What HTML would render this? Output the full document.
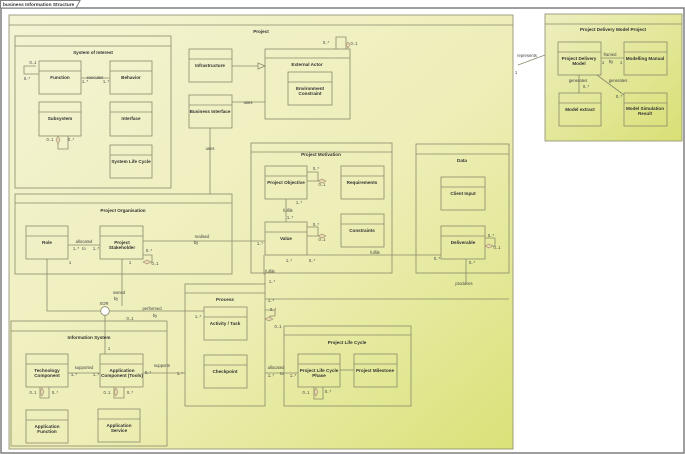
<!DOCTYPE html>
<html><head><meta charset="utf-8"><style>
html,body{margin:0;padding:0;background:#fff;}
svg{display:block;}
text{font-family:"Liberation Sans",sans-serif;font-size:4.6px;fill:#333;text-anchor:middle;font-weight:bold;}
.n{font-weight:normal;font-size:4.2px;fill:#444;}
.s{text-anchor:start;}
</style></head><body>
<svg width="685" height="454" viewBox="0 0 685 454" xmlns="http://www.w3.org/2000/svg">
<defs>
<linearGradient id="g" x1="0" y1="0" x2="1" y2="1">
<stop offset="0" stop-color="#f3f3d4"/><stop offset="0.55" stop-color="#eeeeb8"/><stop offset="1" stop-color="#d9e278"/>
</linearGradient>
<linearGradient id="g2" x1="0" y1="0" x2="1" y2="1">
<stop offset="0" stop-color="#eeeec0"/><stop offset="1" stop-color="#d8e074"/>
</linearGradient>
</defs>
<rect x="0" y="0" width="685" height="454" fill="#fff"/>
<!-- frame -->
<rect x="1" y="8" width="683" height="445" fill="none" stroke="#7f7f7f" stroke-width="1.5"/>
<path d="M0.5 0.5 H80 L76 8 H0.5 Z" fill="#fff" stroke="#7f7f7f"/>
<text x="3" y="6" class="s" style="font-size:4.8px">business Information Structure</text>

<g stroke="#8a8a6c" stroke-width="0.8" fill="none">
<!-- Project package -->
<rect x="9" y="15" width="504" height="434" fill="url(#g)"/>
<line x1="9" y1="25" x2="513" y2="25"/>
<!-- PDM package -->
<rect x="545" y="14" width="137" height="127" fill="url(#g2)"/>
<line x1="545" y1="24" x2="682" y2="24"/>

<!-- packages -->
<rect x="15" y="36" width="156" height="152"/><line x1="15" y1="46" x2="171" y2="46"/>
<rect x="265" y="49" width="85" height="70"/><line x1="265" y1="58" x2="350" y2="58"/>
<rect x="251" y="143" width="141" height="130"/><line x1="251" y1="152" x2="392" y2="152"/>
<rect x="416" y="144" width="93" height="129"/><line x1="416" y1="154" x2="509" y2="154"/>
<rect x="15" y="194" width="217" height="80"/><line x1="15" y1="203" x2="232" y2="203"/>
<rect x="185" y="284" width="80" height="122"/><line x1="185" y1="293" x2="265" y2="293"/>
<rect x="284" y="326" width="127" height="80"/><line x1="284" y1="335" x2="411" y2="335"/>
<rect x="11" y="321" width="156" height="125"/><line x1="11" y1="331" x2="167" y2="331"/>

<!-- classes -->
<g id="cls">
<rect x="39" y="61" width="42" height="33"/><line x1="39" y1="71" x2="81" y2="71"/>
<rect x="110" y="61" width="42" height="33"/><line x1="110" y1="71" x2="152" y2="71"/>
<rect x="39" y="102" width="42" height="34"/><line x1="39" y1="112" x2="81" y2="112"/>
<rect x="110" y="102" width="42" height="34"/><line x1="110" y1="112" x2="152" y2="112"/>
<rect x="110" y="145" width="42" height="33"/><line x1="110" y1="155" x2="152" y2="155"/>
<rect x="189" y="49" width="43" height="33"/><line x1="189" y1="59" x2="232" y2="59"/>
<rect x="189" y="95" width="43" height="33"/><line x1="189" y1="105" x2="232" y2="105"/>
<rect x="288" y="72" width="44" height="33"/><line x1="288" y1="82" x2="332" y2="82"/>
<rect x="265" y="166" width="42" height="33"/><line x1="265" y1="176" x2="307" y2="176"/>
<rect x="341" y="166" width="43" height="33"/><line x1="341" y1="176" x2="384" y2="176"/>
<rect x="265" y="222" width="42" height="33"/><line x1="265" y1="232" x2="307" y2="232"/>
<rect x="341" y="214" width="43" height="33"/><line x1="341" y1="224" x2="384" y2="224"/>
<rect x="441" y="177" width="44" height="33"/><line x1="441" y1="187" x2="485" y2="187"/>
<rect x="441" y="226" width="44" height="33"/><line x1="441" y1="236" x2="485" y2="236"/>
<rect x="26" y="226" width="42" height="33"/><line x1="26" y1="236" x2="68" y2="236"/>
<rect x="100" y="226" width="43" height="33"/><line x1="100" y1="236" x2="143" y2="236"/>
<rect x="204" y="307" width="43" height="33"/><line x1="204" y1="317" x2="247" y2="317"/>
<rect x="204" y="355" width="43" height="33"/><line x1="204" y1="365" x2="247" y2="365"/>
<rect x="298" y="354" width="42" height="33"/><line x1="298" y1="364" x2="340" y2="364"/>
<rect x="354" y="354" width="43" height="33"/><line x1="354" y1="364" x2="397" y2="364"/>
<rect x="26" y="354" width="42" height="33"/><line x1="26" y1="364" x2="68" y2="364"/>
<rect x="100" y="354" width="43" height="33"/><line x1="100" y1="364" x2="143" y2="364"/>
<rect x="26" y="410" width="42" height="33"/><line x1="26" y1="420" x2="68" y2="420"/>
<rect x="98" y="409" width="42" height="33"/><line x1="98" y1="419" x2="140" y2="419"/>
<rect x="558" y="42" width="43" height="33"/><line x1="558" y1="52" x2="601" y2="52"/>
<rect x="624" y="42" width="43" height="33"/><line x1="624" y1="52" x2="667" y2="52"/>
<rect x="559" y="93" width="42" height="33"/><line x1="559" y1="103" x2="601" y2="103"/>
<rect x="624" y="93" width="43" height="33"/><line x1="624" y1="103" x2="667" y2="103"/>
</g>

<!-- connectors -->
<path d="M81 78 H110"/>
<path d="M39 74 H24 V66 H36"/>
<path d="M58 136 V149 H68 V136"/>
<path d="M232 66 H258"/><path d="M258 63 L265 66 L258 69 Z"/>
<path d="M265 102 H232"/>
<path d="M210 128 V194"/>
<path d="M336 49 V37 H346 V49"/>
<path d="M286 199 V222"/>
<path d="M307 181 H318 V172 H307"/>
<path d="M307 236 H318 V227 H307"/>
<path d="M307 255 H441"/>
<path d="M485 238 H495 V246 H485"/>
<path d="M466 259 V284"/>
<path d="M265 299 H509"/>
<path d="M143 241 H232 M232 241 H265"/>
<path d="M68 245 H100"/>
<path d="M143 255 H152 V262 H143"/>
<path d="M47 259 V311 H101"/>
<path d="M122 259 V306"/>
<path d="M109 311 H204"/>
<path d="M105 315 V354"/>
<path d="M143 373 H185"/>
<path d="M68 373 H100"/>
<path d="M40 387 V398 H49 V387"/>
<path d="M114 387 V398 H124 V387"/>
<path d="M265 373 H298"/>
<path d="M340 370 H354"/>
<path d="M314 387 V399 H323 V387"/>
<path d="M265 319 H270 V316 H275 V310 H265"/>
<path d="M264 255 V274 H265 V284"/>
<path d="M601 58 H624"/>
<path d="M579 75 V93"/>
<path d="M597 75 L624 95"/>
<path d="M545 55 L518 65"/>
</g>
<!-- diamonds -->
<g fill="#e8d8b0" stroke="#a08c6c" stroke-width="0.6">
<path d="M58 136 l2 4 l-2 4 l-2 -4 z"/>
<path d="M318 181 l4 -2 l4 2 l-4 2 z"/>
<path d="M318 236 l4 -2 l4 2 l-4 2 z"/>
<path d="M346 45 l2 -3 l2 3 l-2 3 z"/>
<path d="M485 246 l4 -2 l4 2 l-4 2 z"/>
<path d="M143 262 l4 -2 l4 2 l-4 2 z"/>
<path d="M40 392 l2 -4 l2 4 l-2 4 z"/>
<path d="M114 392 l2 -4 l2 4 l-2 4 z"/>
<path d="M314 392 l2 -4 l2 4 l-2 4 z"/>
<path d="M265 319 l4 -2 l4 2 l-4 2 z"/>
</g>
<circle cx="105" cy="311" r="4.3" fill="#fff" stroke="#8a8a6c" stroke-width="0.8"/>

<!-- labels -->
<text x="261" y="33">Project</text>
<text x="613" y="31">Project Delivery Model Project</text>
<text x="93" y="54">System of Interest</text>
<text x="307" y="66">External Actor</text>
<text x="321" y="156">Project Motivation</text>
<text x="462" y="162">Data</text>
<text x="123" y="212">Project Organisation</text>
<text x="225" y="301">Process</text>
<text x="347" y="344">Project Life Cycle</text>
<text x="89" y="339">Information System</text>

<text x="60" y="79">Function</text>
<text x="131" y="79">Behavior</text>
<text x="60" y="120">Subsystem</text>
<text x="131" y="120">Interface</text>
<text x="131" y="163">System Life Cycle</text>
<text x="210" y="67">Infrastructure</text>
<text x="210" y="113">Business Interface</text>
<text x="310" y="90">Environment</text><text x="310" y="95">Constraint</text>
<text x="286" y="184">Project Objective</text>
<text x="362" y="184">Requirements</text>
<text x="286" y="240">Value</text>
<text x="362" y="232">Constraints</text>
<text x="463" y="195">Client Input</text>
<text x="463" y="244">Deliverable</text>
<text x="47" y="244">Role</text>
<text x="122" y="244">Project</text><text x="122" y="249">Stakeholder</text>
<text x="225" y="325">Activity / Task</text>
<text x="225" y="373">Checkpoint</text>
<text x="319" y="372">Project Life Cycle</text><text x="319" y="377">Phase</text>
<text x="375" y="372">Project Milestone</text>
<text x="47" y="372">Technology</text><text x="47" y="377">Component</text>
<text x="122" y="372">Application</text><text x="122" y="377">Component (Tools)</text>
<text x="47" y="428">Application</text><text x="47" y="433">Function</text>
<text x="119" y="427">Application</text><text x="119" y="432">Service</text>
<text x="579" y="60">Project Delivery</text><text x="579" y="65">Model</text>
<text x="645" y="60">Modelling Manual</text>
<text x="580" y="111">Model extract</text>
<text x="645" y="110">Model Simulation</text><text x="645" y="115">Result</text>

<g class="n">
<text class="n" x="95" y="79">executes</text><text class="n" x="85" y="83">1..*</text><text class="n" x="106" y="83">1..*</text>
<text class="n" x="33" y="64">0..1</text><text class="n" x="27" y="80">0..*</text>
<text class="n" x="50" y="141">0..1</text><text class="n" x="71" y="141">0..*</text>
<text class="n" x="248" y="104">uses</text>
<text class="n" x="210" y="150">uses</text>
<text class="n" x="326" y="44">0..*</text><text class="n" x="354" y="45">0..1</text>
<text class="n" x="288" y="212">fulfils</text><text class="n" x="299" y="204">1..*</text><text class="n" x="290" y="219">1..*</text>
<text class="n" x="316" y="170">0..*</text><text class="n" x="322" y="186">0..1</text>
<text class="n" x="316" y="226">0..*</text><text class="n" x="322" y="241">0..1</text>
<text class="n" x="375" y="254">fulfils</text>
<text class="n" x="289" y="262">1..*</text><text class="n" x="312" y="262">0..*</text>
<text class="n" x="437" y="260">0..*</text><text class="n" x="491" y="237">0..*</text><text class="n" x="497" y="249">0..1</text>
<text class="n" x="472" y="264">0..*</text>
<text class="n" x="464" y="285">produces</text>
<text class="n" x="202" y="238">realised</text><text class="n" x="196" y="244">by</text>
<text class="n" x="260" y="245">1..*</text>
<text class="n" x="84" y="243">allocated</text><text class="n" x="76" y="250">1..*</text><text class="n" x="84" y="250">to</text><text class="n" x="96" y="250">1..*</text>
<text class="n" x="149" y="252">0..*</text><text class="n" x="155" y="265">0..1</text>
<text class="n" x="70" y="264">1</text><text class="n" x="130" y="264">1</text>
<text class="n" x="119" y="294">owned</text><text class="n" x="116" y="300">by</text>
<text class="n" x="104" y="305">XOR</text>
<text class="n" x="152" y="310">performed</text><text class="n" x="155" y="317">by</text>
<text class="n" x="130" y="320">0..1</text>
<text class="n" x="198" y="318">1..*</text>
<text class="n" x="109" y="350">1</text>
<text class="n" x="84" y="369">supported</text><text class="n" x="74" y="376">1..*</text><text class="n" x="96" y="376">1..*</text>
<text class="n" x="162" y="367">supports</text><text class="n" x="148" y="374">0..*</text><text class="n" x="180" y="375">1..*</text>
<text class="n" x="33" y="394">0..1</text><text class="n" x="55" y="394">0..*</text>
<text class="n" x="107" y="394">0..1</text><text class="n" x="130" y="394">0..*</text>
<text class="n" x="276" y="369">allocated</text><text class="n" x="271" y="377">1..*</text><text class="n" x="282" y="375">to</text><text class="n" x="293" y="377">1..*</text>
<text class="n" x="306" y="394">0..1</text><text class="n" x="328" y="393">0..*</text>
<text class="n" x="270" y="273">fulfils</text><text class="n" x="272" y="283">1..*</text>
<text class="n" x="271" y="302">1..*</text><text class="n" x="273" y="311">0..*</text><text class="n" x="278" y="328">0..1</text>
<text class="n" x="527" y="57">represents</text><text class="n" x="516" y="74">1</text>
<text class="n" x="610" y="56">framed</text><text class="n" x="611" y="63">by</text><text class="n" x="603" y="64">1</text><text class="n" x="621" y="64">1</text>
<text class="n" x="578" y="82">generates</text><text class="n" x="618" y="82">generates</text>
<text class="n" x="586" y="88">0..*</text><text class="n" x="619" y="98">0..*</text>
</g>
</svg>
</body></html>
